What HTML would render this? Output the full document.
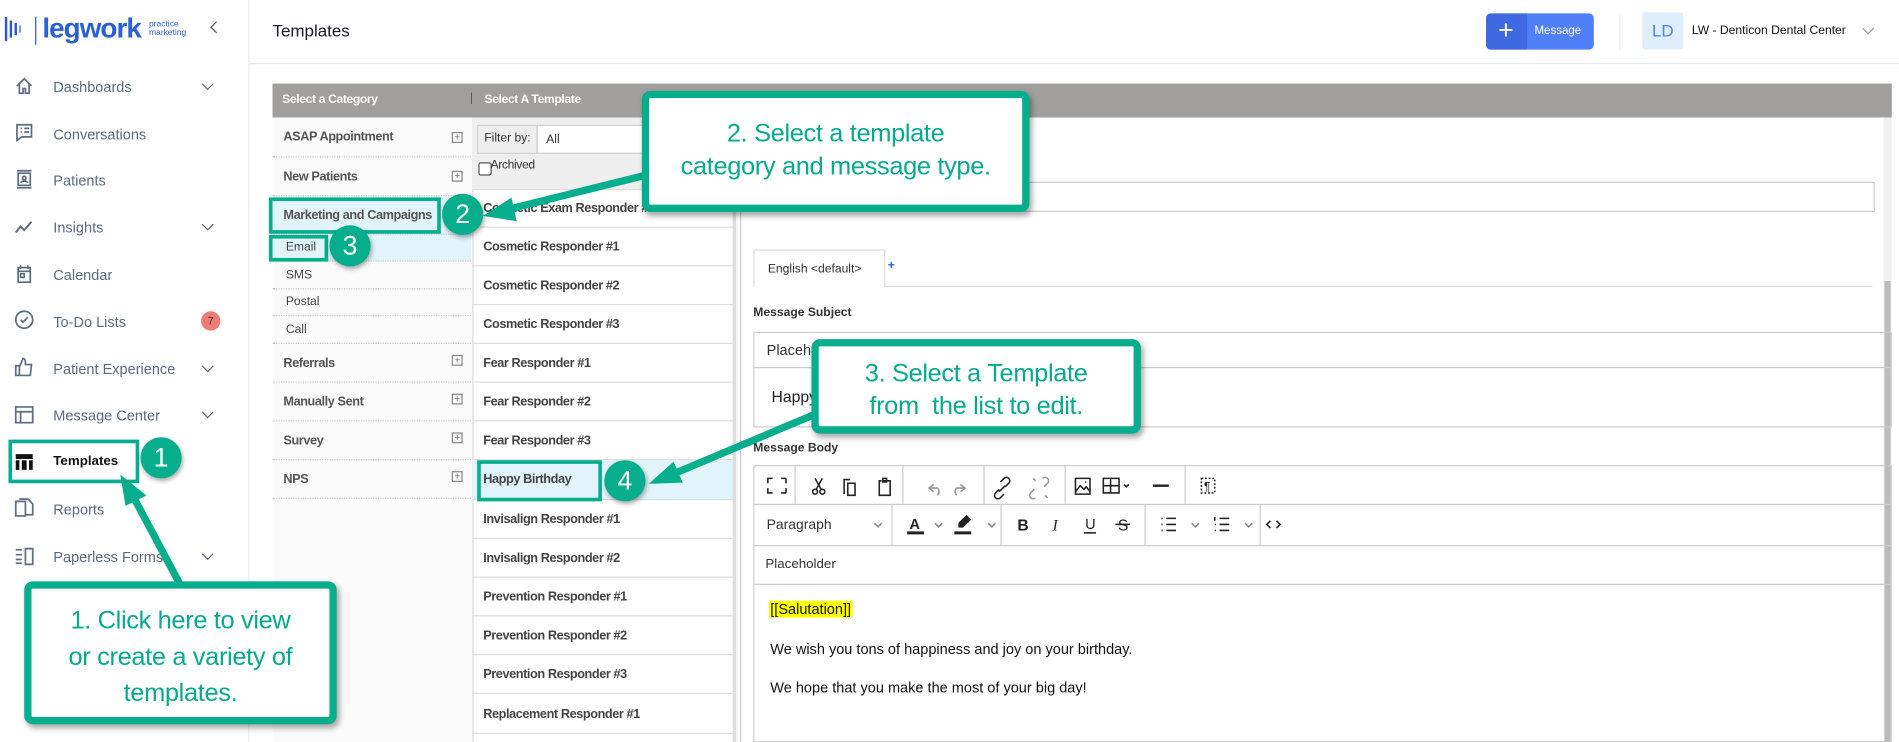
<!DOCTYPE html>
<html><head><meta charset="utf-8"><style>
html,body{margin:0;padding:0;width:1899px;height:742px;overflow:hidden;background:#fff}
#w{position:absolute;left:0;top:0;width:1568px;height:613px;transform:scale(1.21110);transform-origin:0 0;font-family:"Liberation Sans",Arial,sans-serif;}
.a{position:absolute}
.nav{position:absolute;left:44px;font-size:12px;color:#5b6b82}
.chev{position:absolute;left:168px;width:6px;height:6px;border-right:1.5px solid #5b6b82;border-bottom:1.5px solid #5b6b82;transform:rotate(45deg)}
.ico{position:absolute;left:12px;width:16px;height:16px}
.cat{position:absolute;left:225px;width:164px;border-bottom:1px dotted #ccc;font-size:10.5px;letter-spacing:-0.35px;color:#555;font-weight:bold;box-sizing:border-box;padding-left:9px}
.sub{font-weight:normal;font-size:10px;color:#444;padding-left:11px;letter-spacing:0}
.plus{position:absolute;left:148px;width:7px;height:7px;border:1px solid #888;font-size:8px;line-height:7px;text-align:center;color:#666;font-weight:normal;letter-spacing:0}
.tpl{position:absolute;left:390px;width:215px;height:32px;border-bottom:1px solid #ddd;box-sizing:border-box;font-size:10.5px;letter-spacing:-0.35px;font-weight:bold;color:#444;padding-left:9px;line-height:32px;overflow:hidden;white-space:nowrap}
.co{position:absolute;border:6px solid #06ae8e;border-radius:7px;background:#fff;color:#07ab8c;text-align:center;box-shadow:2px 3px 5px rgba(0,0,0,.35);box-sizing:border-box;font-size:21px;line-height:27px;letter-spacing:-0.3px}
.bd{position:absolute;width:34px;height:34px;border-radius:50%;background:#06ae8e;color:#fff;font-size:22px;line-height:34px;text-align:center;box-shadow:1px 2px 4px rgba(0,0,0,.35)}
.hl{position:absolute;border:3px solid #06ae8e;box-sizing:border-box}
</style></head><body><div id="w">
<!-- sidebar -->
<div class="a" style="left:205px;top:0;width:1px;height:613px;background:#e6ebf2"></div>
<div class="a" style="left:4px;top:14px;width:2px;height:20px;background:#2b55d1"></div>
<div class="a" style="left:8px;top:17px;width:2px;height:14px;background:#2b55d1"></div>
<div class="a" style="left:12px;top:19px;width:2px;height:10px;background:#2b55d1"></div>
<div class="a" style="left:16px;top:21px;width:1px;height:6px;background:#2b55d1"></div>
<div class="a" style="left:29px;top:14px;width:1px;height:23px;background:#2b55d1"></div>
<div class="a" style="left:35px;top:10px;font-size:23px;font-weight:bold;color:#2b5fd6;letter-spacing:-.8px">legwork</div>
<div class="a" style="left:123px;top:17px;font-size:7px;line-height:7px;color:#2b5fd6">practice<br>marketing</div>
<div class="a" style="left:175px;top:19px;width:6px;height:6px;border-left:1.5px solid #555;border-bottom:1.5px solid #555;transform:rotate(45deg)"></div>

<svg class="ico" style="top:63px" viewBox="0 0 16 16" fill="none" stroke="#5b6b82" stroke-width="1.4"><path d="M2 8L8 2l6 6M4 6v8h3v-4h2v4h3V6"/></svg>
<div class="nav" style="top:65px">Dashboards</div><div class="chev" style="top:66px"></div>
<svg class="ico" style="top:101px" viewBox="0 0 16 16" fill="none" stroke="#5b6b82" stroke-width="1.4"><path d="M2 2h12v10H6l-4 3zM5 5h1M8 5h4M5 8h1M8 8h4"/></svg>
<div class="nav" style="top:104px">Conversations</div>
<svg class="ico" style="top:140px" viewBox="0 0 16 16" fill="none" stroke="#5b6b82" stroke-width="1.4"><path d="M2 1h12M2 15h12M3 3h10v10H3zM8 5.5a1.5 1.5 0 1 0 .01 0M5 11c1-2 5-2 6 0"/></svg>
<div class="nav" style="top:142px">Patients</div>
<svg class="ico" style="top:179px" viewBox="0 0 16 16" fill="none" stroke="#5b6b82" stroke-width="1.6"><path d="M1 13l4-5 3 3 6-7"/></svg>
<div class="nav" style="top:181px">Insights</div><div class="chev" style="top:182px"></div>
<svg class="ico" style="top:218px" viewBox="0 0 16 16" fill="none" stroke="#5b6b82" stroke-width="1.4"><path d="M3 3h10v12H3zM5 1v3M11 1v3M3 6h10M5 8h3v3H5z"/></svg>
<div class="nav" style="top:220px">Calendar</div>
<svg class="ico" style="top:256px" viewBox="0 0 16 16" fill="none" stroke="#5b6b82" stroke-width="1.4"><circle cx="8" cy="8" r="7"/><path d="M5 8l2 2 4-4"/></svg>
<div class="nav" style="top:259px">To-Do Lists</div>
<div class="a" style="left:166px;top:257px;width:16px;height:16px;border-radius:50%;background:#ef7b76;color:#333;font-size:9px;line-height:16px;text-align:center">7</div>
<svg class="ico" style="top:295px" viewBox="0 0 16 16" fill="none" stroke="#5b6b82" stroke-width="1.4"><path d="M1 7h3v8H1zM4 8l3-7c1 0 2 1 2 3v2h5l-1 9H4"/></svg>
<div class="nav" style="top:298px">Patient Experience</div><div class="chev" style="top:299px"></div>
<svg class="ico" style="top:334px" viewBox="0 0 16 16" fill="none" stroke="#5b6b82" stroke-width="1.4"><path d="M1 2h14v13H1zM1 6h14M5 6v9"/></svg>
<div class="nav" style="top:336px">Message Center</div><div class="chev" style="top:337px"></div>
<svg class="ico" style="top:373px" viewBox="0 0 16 16"><path d="M1 2h14v4H1zM1 7h3v8H1zM6 7h4v8H6zM12 7h3v8h-3z" fill="#111"/></svg>
<div class="nav" style="top:375px;color:#111;font-weight:bold;font-size:11px">Templates</div>
<svg class="ico" style="top:411px" viewBox="0 0 16 16" fill="none" stroke="#5b6b82" stroke-width="1.4"><path d="M1 3h8v12H1zM4 1h7l4 4v9H9"/></svg>
<div class="nav" style="top:414px">Reports</div>
<svg class="ico" style="top:451px" viewBox="0 0 16 16" fill="none" stroke="#5b6b82" stroke-width="1.4"><path d="M1 3h5M1 7h5M1 11h5M1 14h5M9 2h6v13H9z"/></svg>
<div class="nav" style="top:453px">Paperless Forms</div><div class="chev" style="top:454px"></div>

<!-- header -->
<div class="a" style="left:206px;top:52px;width:1362px;height:1px;background:#e6ebf2"></div>
<div class="a" style="left:225px;top:17px;font-size:14px;color:#1a1a2e">Templates</div>
<div class="a" style="left:1227px;top:11px;width:89px;height:30px;border-radius:4px;background:#4f80f7;overflow:hidden"><div style="position:absolute;left:0;top:0;width:34px;height:30px;background:#3f69e0"></div><div style="position:absolute;left:10px;top:1px;color:#fff;font-size:22px">+</div><div style="position:absolute;left:40px;top:9px;color:#fff;font-size:9.5px">Message</div></div>
<div class="a" style="left:1337px;top:11px;width:1px;height:30px;background:#e6ebf2"></div>
<div class="a" style="left:1356px;top:10px;width:34px;height:31px;border-radius:3px;background:#dfeefd;color:#4f80f7;font-size:14px;line-height:31px;text-align:center">LD</div>
<div class="a" style="left:1397px;top:20px;font-size:10px;color:#111">LW - Denticon Dental Center</div>
<div class="a" style="left:1539px;top:20px;width:6px;height:6px;border-right:1px solid #999;border-bottom:1px solid #999;transform:rotate(45deg)"></div>

<!-- main panel -->
<div class="a" style="left:225px;top:69px;width:1337px;height:28px;background:#a09f9d"></div>
<div class="a" style="left:233px;top:77px;font-size:10px;color:#fff;font-weight:bold;letter-spacing:-0.3px">Select a Category</div>
<div class="a" style="left:388px;top:76px;font-size:10px;color:#555">|</div>
<div class="a" style="left:400px;top:77px;font-size:10px;color:#fff;font-weight:bold;letter-spacing:-0.3px">Select A Template</div>
<div class="a" style="left:225px;top:97px;width:165px;height:516px;background:#fafafa;border-right:1px solid #ddd"></div>
<div class="cat" style="top:97px;height:33px;line-height:33px">ASAP Appointment<span class="plus" style="top:12px">+</span></div>
<div class="cat" style="top:130px;height:32px;line-height:32px">New Patients<span class="plus" style="top:11px">+</span></div>
<div class="cat" style="top:162px;height:32px;line-height:32px;background:#e1f3fb">Marketing and Campaigns</div>
<div class="cat sub" style="top:194px;height:22px;line-height:22px;background:#e1f3fb">Email</div>
<div class="cat sub" style="top:216px;height:23px;line-height:23px">SMS</div>
<div class="cat sub" style="top:239px;height:22px;line-height:22px">Postal</div>
<div class="cat sub" style="top:261px;height:23px;line-height:23px">Call</div>
<div class="cat" style="top:284px;height:32px;line-height:32px">Referrals<span class="plus" style="top:9px">+</span></div>
<div class="cat" style="top:316px;height:32px;line-height:32px">Manually Sent<span class="plus" style="top:9px">+</span></div>
<div class="cat" style="top:348px;height:32px;line-height:32px">Survey<span class="plus" style="top:9px">+</span></div>
<div class="cat" style="top:380px;height:32px;line-height:32px">NPS<span class="plus" style="top:9px">+</span></div>

<div class="a" style="left:390px;top:97px;width:218px;height:59px;background:#eee;border-bottom:1px solid #ddd"></div>
<div class="a" style="left:394px;top:103px;width:150px;height:22px;border:1px solid #ccc;background:#fff"><div style="position:absolute;left:0;top:0;width:48px;height:22px;background:#eee;border-right:1px solid #ccc;font-size:10px;line-height:22px;text-align:center;color:#333">Filter by:</div><div style="position:absolute;left:56px;top:6px;font-size:10px;color:#333">All</div></div>
<div class="a" style="left:395px;top:134px;width:9px;height:9px;border:1px solid #555;background:#fff;border-radius:2px"></div>
<div class="a" style="left:405px;top:131px;font-size:10px;color:#333;letter-spacing:-0.3px">Archived</div>
<div class="tpl" style="top:156px">Cosmetic Exam Responder #1</div>
<div class="tpl" style="top:188px">Cosmetic Responder #1</div>
<div class="tpl" style="top:220px">Cosmetic Responder #2</div>
<div class="tpl" style="top:252px">Cosmetic Responder #3</div>
<div class="tpl" style="top:284px">Fear Responder #1</div>
<div class="tpl" style="top:316px">Fear Responder #2</div>
<div class="tpl" style="top:348px">Fear Responder #3</div>
<div class="tpl" style="top:380px;height:33px;line-height:33px;background:#e1f3fb">Happy Birthday</div>
<div class="tpl" style="top:413px">Invisalign Responder #1</div>
<div class="tpl" style="top:445px">Invisalign Responder #2</div>
<div class="tpl" style="top:477px">Prevention Responder #1</div>
<div class="tpl" style="top:509px">Prevention Responder #2</div>
<div class="tpl" style="top:541px">Prevention Responder #3</div>
<div class="tpl" style="top:574px">Replacement Responder #1</div>
<div class="a" style="left:605px;top:97px;width:3px;height:516px;background:#ddd"></div>
<div class="a" style="left:611px;top:97px;width:1px;height:516px;background:#ccc"></div>

<!-- editor -->
<div class="a" style="left:622px;top:150px;width:924px;height:23px;border:1px solid #ccc"></div>
<div class="a" style="left:1555px;top:97px;width:7px;height:516px;background:#f0f0f0"></div>
<div class="a" style="left:1556px;top:232px;width:5px;height:381px;background:#bbb"></div>
<div class="a" style="left:622px;top:236px;width:924px;height:1px;background:#ddd"></div>
<div class="a" style="left:622px;top:206px;width:109px;height:31px;border:1px solid #ddd;border-bottom:none;background:#fff;box-sizing:border-box;font-size:10px;color:#333;line-height:31px;padding-left:11px">English &lt;default&gt;</div>
<div class="a" style="left:733px;top:214px;font-size:10px;color:#2b5fd6;font-weight:bold">+</div>
<div class="a" style="left:622px;top:253px;font-size:10px;font-weight:bold;color:#333">Message Subject</div>
<div class="a" style="left:622px;top:274px;width:940px;height:79px;border:1px solid #ccc;box-sizing:border-box"></div>
<div class="a" style="left:622px;top:303px;width:940px;height:1px;background:#ccc"></div>
<div class="a" style="left:633px;top:282px;font-size:12px;color:#333">Placeholder</div>
<div class="a" style="left:637px;top:320px;font-size:13px;color:#222">Happy Birthday</div>
<div class="a" style="left:622px;top:365px;font-size:10px;font-weight:bold;color:#333">Message Body</div>
<div class="a" style="left:622px;top:384px;width:940px;height:229px;border:1px solid #ccc;box-sizing:border-box"></div>
<div class="a" style="left:622px;top:416px;width:940px;height:1px;background:#ccc"></div>
<div class="a" style="left:622px;top:450px;width:940px;height:1px;background:#ccc"></div>
<div class="a" style="left:622px;top:482px;width:940px;height:1px;background:#ccc"></div>
<div class="a" style="left:656px;top:384px;width:1px;height:32px;background:#ccc"></div>
<div class="a" style="left:745px;top:384px;width:1px;height:32px;background:#ccc"></div>
<div class="a" style="left:812px;top:384px;width:1px;height:32px;background:#ccc"></div>
<div class="a" style="left:879px;top:384px;width:1px;height:32px;background:#ccc"></div>
<div class="a" style="left:978px;top:384px;width:1px;height:32px;background:#ccc"></div>
<div class="a" style="left:736px;top:417px;width:1px;height:33px;background:#ccc"></div>
<div class="a" style="left:826px;top:417px;width:1px;height:33px;background:#ccc"></div>
<div class="a" style="left:945px;top:417px;width:1px;height:33px;background:#ccc"></div>
<div class="a" style="left:1040px;top:417px;width:1px;height:33px;background:#ccc"></div>
<svg class="a" style="left:622px;top:384px" width="440" height="66" viewBox="0 0 440 66" fill="none" stroke="#222" stroke-width="1.3">
<path d="M12 15v-4h4M12 19v4h4M27 11h-4M27 15v-4M27 23h-4M27 19v4"/>
<circle cx="51" cy="22" r="2"/><circle cx="57" cy="22" r="2"/><path d="M52 20l5-9M56 20l-5-9"/>
<path d="M80 12h-5v12M78 15h6v10h-6z"/>
<path d="M107 13h6v12h-9V13h2M107 11h3v3h-3z"/>
<path d="M149 16l-4 3 4 3M145 19h7a4 4 0 0 1 0 6" stroke="#999"/><path d="M171 16l4 3-4 3M175 19h-7a4 4 0 0 0 0 6" stroke="#999"/>
<path d="M203 20l-3 3a2.5 2.5 0 0 0 4 4l3-3M208 18l3-3a2.5 2.5 0 0 0-4-4l-3 3M203 22l5-5"/>
<path d="M232 20l-3 3a2.5 2.5 0 0 0 4 4M240 18l3-3a2.5 2.5 0 0 0-4-4M233 13l-2-2M241 25l2 2" stroke="#999"/>
<path d="M266 11h12v13h-12zM266 22l4-5 3 3 2-2 3 4M274 14h1"/>
<path d="M289 11h13v12h-13zM289 17h13M295 11v12M306 16l2 2 2-2" />
<path d="M330 17h13" stroke-width="2"/>
<path d="M370 11h11v12h-11z" stroke-dasharray="1.5 1.5"/><text x="372" y="21" font-size="10" fill="#222" stroke="none" font-family="Liberation Sans">¶</text>
<text x="11" y="53" font-size="11.5" fill="#333" stroke="none" font-family="Liberation Sans">Paragraph</text>
<path d="M100 48l3 3 3-3M150 48l3 3 3-3M194 48l3 3 3-3M362 48l3 3 3-3M406 48l3 3 3-3" stroke="#888"/>
<text x="129" y="53" font-size="12" fill="#222" stroke="none" font-family="Liberation Sans" font-weight="bold">A</text><path d="M127 56h14" stroke-width="2.5"/>
<path d="M170 48l6-6 3 3-6 6h-3z" fill="#222"/><path d="M166 56h14" stroke-width="2.5"/>
<text x="218" y="54" font-size="13" fill="#222" stroke="none" font-family="Liberation Sans" font-weight="bold">B</text>
<text x="247" y="54" font-size="13" fill="#222" stroke="none" font-family="Liberation Serif" font-style="italic">I</text>
<text x="274" y="53" font-size="12" fill="#222" stroke="none" font-family="Liberation Sans">U</text><path d="M273 56h10"/>
<text x="301" y="54" font-size="13" fill="#222" stroke="none" font-family="Liberation Sans">S</text><path d="M299 49h12"/>
<path d="M341 44h8M341 49h8M341 54h8M337 44h1M337 49h1M337 54h1"/>
<path d="M385 44h8M385 49h8M385 54h8M381 43v3M381 49h1M381 54h1"/>
<path d="M427 46l-3 3 3 3M432 46l3 3-3 3"/>
</svg>
<div class="a" style="left:632px;top:460px;font-size:11px;color:#333">Placeholder</div>
<div class="a" style="left:635px;top:496px;font-size:12px;color:#111;background:#ff0;padding:0 1px">[[Salutation]]</div>
<div class="a" style="left:636px;top:529px;font-size:12px;color:#111">We wish you tons of happiness and joy on your birthday.</div>
<div class="a" style="left:636px;top:561px;font-size:12px;color:#111">We hope that you make the most of your big day!</div>

<!-- annotations -->
<div class="hl" style="left:7px;top:363px;width:108px;height:36px"></div>
<div class="hl" style="left:222px;top:163px;width:142px;height:30px"></div>
<div class="hl" style="left:222px;top:194px;width:49px;height:22px"></div>
<div class="hl" style="left:394px;top:380px;width:103px;height:34px"></div>
<svg class="a" style="left:0;top:0" width="1568" height="613">
<g fill="#06ae8e" stroke="#06ae8e">
<path d="M540 143L415 174" stroke-width="6"/><path d="M400 178l22-14 4 18z"/>
<path d="M685 337L552 393" stroke-width="6"/><path d="M537 399l19-17 7 16z"/>
<path d="M150 485L110 410" stroke-width="6"/><path d="M100 393l20 16-16 8z"/>
</g></svg>
<div class="co" style="left:530px;top:75px;width:320px;height:100px;padding-top:16px">2. Select a template<br>category and message type.</div>
<div class="co" style="left:670px;top:280px;width:272px;height:78px;padding-top:9px">3. Select a Template<br>from &nbsp;the list to edit.</div>
<div class="co" style="left:20px;top:480px;width:258px;height:118px;padding-top:12px;line-height:30px">1. Click here to view<br>or create a variety of<br>templates.</div>
<div class="bd" style="left:116px;top:361px">1</div>
<div class="bd" style="left:365px;top:160px">2</div>
<div class="bd" style="left:272px;top:186px">3</div>
<div class="bd" style="left:499px;top:380px">4</div>
</div></body></html>
